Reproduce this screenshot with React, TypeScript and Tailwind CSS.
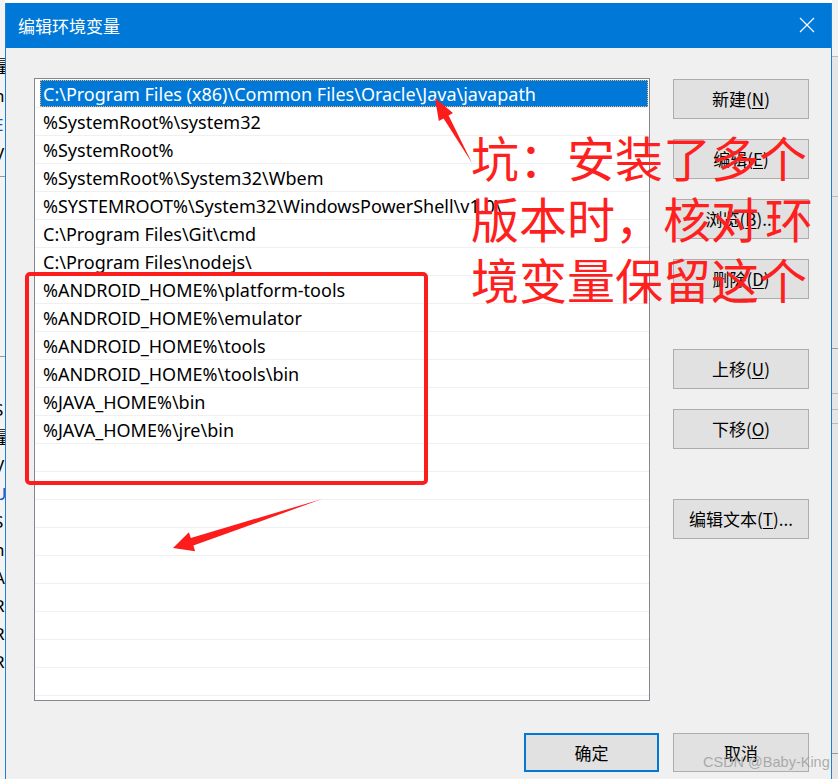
import React from "react";

const PATHS = [
  "C:\\Program Files (x86)\\Common Files\\Oracle\\Java\\javapath",
  "%SystemRoot%\\system32",
  "%SystemRoot%",
  "%SystemRoot%\\System32\\Wbem",
  "%SYSTEMROOT%\\System32\\WindowsPowerShell\\v1.0\\",
  "C:\\Program Files\\Git\\cmd",
  "C:\\Program Files\\nodejs\\",
  "%ANDROID_HOME%\\platform-tools",
  "%ANDROID_HOME%\\emulator",
  "%ANDROID_HOME%\\tools",
  "%ANDROID_HOME%\\tools\\bin",
  "%JAVA_HOME%\\bin",
  "%JAVA_HOME%\\jre\\bin",
];

const ROW_COUNT = 23;

// side buttons: label, mnemonic, trailing text, top margin
const SIDE_BUTTONS = [
  { label: "新建", key: "N", tail: "", mt: "mt-0" },
  { label: "编辑", key: "E", tail: "", mt: "mt-[20px]" },
  { label: "浏览", key: "B", tail: "...", mt: "mt-[20px]" },
  { label: "删除", key: "D", tail: "", mt: "mt-[20px]" },
  { label: "上移", key: "U", tail: "", mt: "mt-[50px]" },
  { label: "下移", key: "O", tail: "", mt: "mt-[20px]" },
  { label: "编辑文本", key: "T", tail: "...", mt: "mt-[50px]" },
];

const FONT = { fontFamily: '"Noto Sans", "Noto Sans CJK SC", sans-serif' };
const CJK = { fontFamily: '"Noto Sans CJK SC", "Noto Sans", sans-serif' };

function WinButton({ label, k, tail, className = "" }: { label: string; k: string; tail: string; className?: string }) {
  return (
    <button
      className={`w-[136px] h-[40px] bg-[#e1e1e1] border border-[#adadad] text-[17px] text-black flex items-center justify-center whitespace-nowrap ${className}`}
      style={CJK}
    >
      {label}(<span className="underline underline-offset-2">{k}</span>){tail}
    </button>
  );
}

export default function App() {
  const rows = Array.from({ length: ROW_COUNT }, (_, i) => PATHS[i] ?? "");

  return (
    <div className="relative w-[838px] h-[779px] overflow-hidden bg-white flex" style={FONT}>
      {/* window behind the dialog, left edge */}
      <div className="w-[5px] shrink-0 bg-[#f3f3f3] relative overflow-hidden text-[17px] text-black">
        <div className="absolute left-[-6px] top-[52px] flex flex-col leading-[29px]">
          <span>量</span>
          <span>n</span>
          <span className="text-[#0b57c5]">E</span>
          <span>V</span>
        </div>
        <div className="absolute left-0 top-[176px] w-full h-[1px] bg-[#999]" />
        <div className="absolute left-0 top-[356px] w-full h-[1px] bg-[#999]" />
        <div className="absolute left-[-6px] top-[396px] flex flex-col leading-[28px]">
          <span>S</span>
          <span>量</span>
          <span>V</span>
          <span className="text-[#0b57c5]">U</span>
          <span>S</span>
          <span>n</span>
          <span>A</span>
          <span>R</span>
          <span>R</span>
          <span>R</span>
        </div>
      </div>

      {/* dialog */}
      <div className="w-[827px] shrink-0 mt-[3px] flex flex-col border-x border-[#1f7fd6] bg-[#f0f0f0]">
        <div className="h-[45px] bg-[#0078d7] flex items-center justify-between pl-[12px] pr-[16px]">
          <span className="text-white text-[17px]" style={CJK}>编辑环境变量</span>
          <svg width="16" height="16" viewBox="0 0 16 16" className="mb-[2px]">
            <path d="M1 1 L15 15 M15 1 L1 15" stroke="white" strokeWidth="1.2" />
          </svg>
        </div>

        <div className="flex-1 flex flex-col pl-[28px] pr-[22px] pt-[30px]">
          <div className="flex gap-[23px]">
            {/* path list */}
            <div className="w-[616px] h-[623px] bg-white border border-[#828790] pt-[1px] overflow-hidden">
              {rows.map((p, i) => (
                <div key={i} className="h-[28px] border-b border-[#f0f0f0] flex">
                  {i === 0 ? (
                    <div className="ml-[5px] mr-[1px] flex-1 bg-[#0078d7] outline-1 outline-dotted outline-[#f7b36a] -outline-offset-1 text-white pl-[3px] text-[18px] leading-[28px] whitespace-nowrap">
                      {p}
                    </div>
                  ) : (
                    <div className="pl-[8px] text-[18px] leading-[28px] text-black whitespace-nowrap">{p}</div>
                  )}
                </div>
              ))}
            </div>

            <div className="flex flex-col mt-[1px]">
              {SIDE_BUTTONS.map((b) => (
                <WinButton key={b.label} label={b.label} k={b.key} tail={b.tail} className={b.mt} />
              ))}
            </div>
          </div>

          <div className="flex justify-end gap-[14px] mt-[32px]">
            <button className="w-[135px] h-[39px] bg-[#e1e1e1] border-2 border-[#0078d7] text-[17px] text-black" style={CJK}>
              确定
            </button>
            <button className="w-[136px] h-[39px] bg-[#e1e1e1] border border-[#adadad] text-[17px] text-black" style={CJK}>
              取消
            </button>
          </div>
        </div>
      </div>

      {/* window behind, right edge */}
      <div className="flex-1 bg-[#e6e6e6] flex flex-col">
        <div className="h-[57px] border-b border-[#bbb] bg-[#f2f2f2]" />
        <div className="h-[140px] border-b border-[#bbb]" />
        <div className="h-[152px] border-b border-[#999]" />
        <div className="h-[45px] border-b border-[#bbb]" />
        <div className="h-[16px] border-b border-[#bbb]" />
        <div className="h-[14px] border-b border-[#bbb]" />
        <div className="h-[330px] border-b border-[#999]" />
      </div>

      {/* red annotation */}
      <div className="absolute left-[25px] top-[272px] w-[403px] h-[213px] border-4 border-[#fc1d1d] rounded-[5px]" />
      <div className="absolute left-[471px] top-[126px] text-[#fe1f1f] text-[48px] leading-[61px] font-normal whitespace-nowrap" style={CJK}>
        <div>坑：安装了多个</div>
        <div>
          版本时，核对<span className="ml-[6px]">环</span>
        </div>
        <div>境变量保留这个</div>
      </div>
      <svg className="absolute left-0 top-0 pointer-events-none" width="838" height="779">
        <polygon
          fill="#fd1c1c"
          points="435,98 453,113 448.6,115.4 472,163 443.6,118.4 438.8,121"
        />
        <polygon
          fill="#fd1c1c"
          points="173,548 188.9,532.3 190.8,538 322,499 193.4,545.6 195.1,551.3"
        />
      </svg>

      <div
        className="absolute left-[703px] top-[752px] text-[14.5px] text-[#9a9a9a]/80 whitespace-nowrap"
        style={{ fontFamily: '"Liberation Sans", Arial, sans-serif' }}
      >
        CSDN @Baby-King
      </div>
    </div>
  );
}
